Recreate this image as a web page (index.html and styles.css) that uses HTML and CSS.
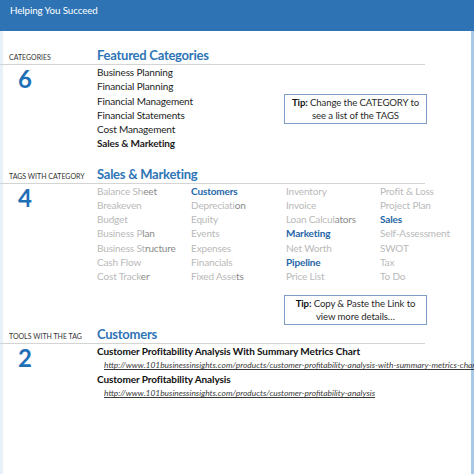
FILE: index.html
```html
<!DOCTYPE html>
<html>
<head>
<meta charset="utf-8">
<link rel="stylesheet" href="styles.css">
</head>
<body>
<div class="page">
  <div class="header">Helping You Succeed</div>
  <div class="sheet">
    <section class="sec sec1">
      <div class="title-row">
        <div class="label">CATEGORIES</div>
        <div class="title">Featured Categories</div>
      </div>
      <div class="body">
        <div class="count">6</div>
        <div class="content flexrow">
          <ul class="list">
            <li>Business Planning</li>
            <li>Financial Planning</li>
            <li>Financial Management</li>
            <li>Financial Statements</li>
            <li>Cost Management</li>
            <li class="sel">Sales &amp; Marketing</li>
          </ul>
          <div class="tip tip1"><b>Tip:</b> Change the CATEGORY to<br>see a list of the TAGS</div>
        </div>
      </div>
    </section>

    <section class="sec sec2">
      <div class="title-row">
        <div class="label">TAGS WITH CATEGORY</div>
        <div class="title">Sales &amp; Marketing</div>
      </div>
      <div class="body">
        <div class="count">4</div>
        <div class="content">
          <div class="tags">
            <span>Balance Sh<i>eet</i></span><span class="on">Customers</span><span>Inventory</span><span>Profit &amp; Loss</span>
            <span>Breakeven</span><span>Depreciati<i>on</i></span><span>Invoice</span><span>Project Plan</span>
            <span>Budget</span><span>Equity</span><span>Loan Calcul<i>ators</i></span><span class="on">Sales</span>
            <span>Business P<i>lan</i></span><span>Events</span><span class="on">Marketing</span><span>Self-Assessment</span>
            <span>Business St<i>ructure</i></span><span>Expenses</span><span>Net Worth</span><span>SWOT</span>
            <span>Cash Flow</span><span>Financials</span><span class="on">Pipeline</span><span>Tax</span>
            <span>Cost Track<i>er</i></span><span>Fixed Asse<i>ts</i></span><span>Price List</span><span>To Do</span>
          </div>
          <div class="tip tip2"><b>Tip:</b> Copy &amp; Paste the Link to<br>view more details…</div>
        </div>
      </div>
    </section>

    <section class="sec sec3">
      <div class="title-row">
        <div class="label">TOOLS WITH THE TAG</div>
        <div class="title">Customers</div>
      </div>
      <div class="body">
        <div class="count">2</div>
        <div class="content">
          <div class="tool">Customer Profitability Analysis With Summary Metrics Chart</div>
          <div class="url">http://www.101businessinsights.com/products/customer-profitability-analysis-with-summary-metrics-chart</div>
          <div class="tool">Customer Profitability Analysis</div>
          <div class="url">http://www.101businessinsights.com/products/customer-profitability-analysis</div>
        </div>
      </div>
    </section>
  </div>
</div>
</body>
</html>
```

FILE: styles.css
```css
html, body {
  margin: 0;
  padding: 0;
  background: #ffffff;
}
.page {
  width: 474px;
  height: 474px;
  overflow: hidden;
  font-family: Lato, "Open Sans", "Liberation Sans", sans-serif;
  color: #1c1c1c;
}
.header {
  height: 31px;
  box-sizing: border-box;
  background: #2e74b5;
  color: #ffffff;
  font-size: 9.8px;
  letter-spacing: -0.1px;
  line-height: 14px;
  padding: 3px 0 0 10px;
}
.sheet {
  height: 443px;
  box-sizing: border-box;
  border-left: 3px solid #e8f1fa;
  border-right: 3px solid #a9c9e8;
  padding-top: 15px;
}
.title-row {
  display: flex;
  align-items: baseline;
  width: 422px;
  height: 18px;
  border-bottom: 1px solid #d4d4d4;
  margin-left: -3px;
  padding-left: 3px;
}
.label {
  width: 88px;
  padding-left: 6px;
  font-size: 7px;
  color: #333333;
}
.title {
  font-size: 13px;
  letter-spacing: -0.25px;
  font-weight: 700;
  color: #2e75b6;
  line-height: 18px;
}
.body {
  display: flex;
}
.count {
  width: 79px;
  padding-left: 15px;
  font-size: 24px;
  font-weight: 700;
  color: #1f6fb7;
  line-height: 24px;
  padding-top: 2px;
}
.content {
  flex: 1;
  min-width: 0;
}
.flexrow {
  display: flex;
}
.list {
  list-style: none;
  margin: 0;
  padding: 0;
  width: 187px;
  font-size: 10px;
  letter-spacing: -0.15px;
  line-height: 14.3px;
}
.list .sel {
  font-weight: 700;
}
.tip {
  box-sizing: border-box;
  width: 143px;
  height: 30px;
  border: 1.5px solid #7f9cc4;
  text-align: center;
  font-size: 9.6px;
  letter-spacing: -0.1px;
  line-height: 13px;
  color: #2a2a2a;
  padding-top: 1px;
}
.tip b {
  font-weight: 700;
  color: #111111;
}
.tip1 {
  margin-top: 29px;
}
.sec2 {
  margin-top: 14px;
}
.tags {
  display: grid;
  grid-template-columns: 94px 95px 94px 94px;
  font-size: 10px;
  letter-spacing: -0.15px;
  line-height: 14.2px;
  color: #b9b9b9;
  white-space: nowrap;
}
.tags i {
  font-style: normal;
  color: #8a8a8a;
}
.tags .on {
  font-weight: 700;
  color: #2566a8;
}
.tip2 {
  margin-top: 12px;
  margin-left: 187px;
}
.sec3 {
  margin-top: 0;
}
.tool {
  font-size: 10px;
  letter-spacing: -0.1px;
  font-weight: 700;
  line-height: 14px;
  color: #111111;
  white-space: nowrap;
}
.url {
  font-size: 8.4px;
  font-style: italic;
  text-decoration: underline;
  color: #3a3a3a;
  line-height: 14px;
  padding-left: 7px;
  white-space: nowrap;
}
```
